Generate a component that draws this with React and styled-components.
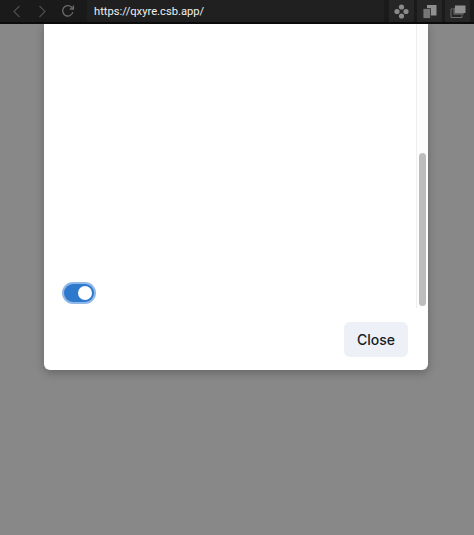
import React, { useState } from 'react';
import styled, { createGlobalStyle } from 'styled-components';

const Global = createGlobalStyle`
    html, body{
        margin: 0;
        padding: 0;
        height: 100%;
        overflow: hidden;
        background: #888888;
        font-family: Inter, "Liberation Sans", sans-serif;
    }
`

const Page = styled.div`
    display: flex;
    flex-direction: column;
    height: 535px;
    background: #888888;
`

const BrowserBar = styled.header`
    display: flex;
    align-items: stretch;
    height: 22px;
    background: #1a1a1a;
    border-bottom: 2px solid #0c0c0c;
`

const NavButtons = styled.div`
    display: flex;
    align-items: center;
    gap: 10px;
    width: 87px;
    padding-left: 8px;
    box-sizing: border-box;
`

const NavButton = styled.span`
    display: flex;
    align-items: center;
    justify-content: center;
    width: 16px;
    height: 16px;
    color: ${p => p.$color || '#4a4a4a'};
`

const UrlField = styled.div`
    display: flex;
    align-items: center;
    flex: 1;
    padding-left: 7px;
    background: #202020;
    color: #efefef;
    font-family: Roboto, "Liberation Sans", sans-serif;
    font-size: 11.2px;
`

const ToolButtons = styled.div`
    display: flex;
    align-items: center;
    gap: 3px;
    margin-left: 5px;
    padding-right: 4px;
`

const ToolButton = styled.span`
    display: flex;
    align-items: center;
    justify-content: center;
    width: 25px;
    height: 22px;
    background: #262626;
`

const Overlay = styled.div`
    flex: 1;
    padding-left: 44px;
`

const Modal = styled.section`
    display: flex;
    flex-direction: column;
    width: 384px;
    height: 346px;
    background: #ffffff;
    border-radius: 0 0 6px 6px;
    box-shadow: 0 3px 8px rgba(0, 0, 0, 0.25);
`

const ModalBody = styled.div`
    display: flex;
    height: 284px;
`

const ModalContent = styled.div`
    display: flex;
    flex: 1;
    align-items: flex-end;
    padding: 0 0 6px 20px;
`

const ToggleTrack = styled.button`
    display: flex;
    align-items: center;
    justify-content: ${p => p.$on ? 'flex-end' : 'flex-start'};
    width: 30px;
    height: 18px;
    margin: 0;
    padding: 2px;
    box-sizing: border-box;
    border: 0;
    border-radius: 9px;
    background: ${p => p.$on ? '#2f79cc' : '#cbd5e0'};
    box-shadow: 0 0 0 2px #8fb8e8;
    cursor: pointer;
`

const ToggleKnob = styled.span`
    display: block;
    width: 14px;
    height: 14px;
    border-radius: 50%;
    background: #ffffff;
`

const ScrollTrack = styled.div`
    width: 12px;
    box-sizing: border-box;
    padding: 129px 2px 2px 2px;
    background: #fdfdfd;
    border-left: 1px solid #efefef;
`

const ScrollThumb = styled.div`
    width: 7px;
    height: 153px;
    border-radius: 4px;
    background: #bdbdbd;
`

const ModalFooter = styled.footer`
    display: flex;
    justify-content: flex-end;
    padding: 14px 20px 13px 0;
`

const CloseButton = styled.button`
    width: 64px;
    height: 35px;
    padding: 0;
    border: 0;
    border-radius: 6px;
    background: #edf1f7;
    color: #171c26;
    font-family: Inter, "Liberation Sans", sans-serif;
    font-size: 14px;
    font-weight: 500;
    cursor: pointer;
`

const App = () => {
    const [on, setOn] = useState(true)

    return(
        <Page>
            <Global />
            <BrowserBar>
                <NavButtons>
                    <NavButton>
                        <svg width="9" height="13" viewBox="0 0 9 13" fill="none" stroke="currentColor" strokeWidth="1.3"><path d="M7.5 1 2 6.5 7.5 12"/></svg>
                    </NavButton>
                    <NavButton>
                        <svg width="9" height="13" viewBox="0 0 9 13" fill="none" stroke="currentColor" strokeWidth="1.3"><path d="M1.5 1 7 6.5 1.5 12"/></svg>
                    </NavButton>
                    <NavButton $color="#6b6b6b">
                        <svg width="14" height="14" viewBox="0 0 14 14" fill="none" stroke="currentColor" strokeWidth="1.3"><path d="M11.9 8.2A5.2 5.2 0 1 1 10.4 3L12.2 4.8"/><path d="M12.4 1.4v3.6H8.8"/></svg>
                    </NavButton>
                </NavButtons>
                <UrlField>https://qxyre.csb.app/</UrlField>
                <ToolButtons>
                    <ToolButton>
                        <svg width="15" height="15" viewBox="0 0 15 15" fill="#8a8a8a"><circle cx="7.5" cy="3" r="2.6"/><circle cx="3" cy="7.5" r="2.6"/><circle cx="12" cy="7.5" r="2.6"/><circle cx="7.5" cy="12" r="2.6"/></svg>
                    </ToolButton>
                    <ToolButton>
                        <svg width="15" height="15" viewBox="0 0 15 15"><path d="M5 1h9.500v10.500H5z" fill="#8f8f8f"/><path d="M1 4.500h7.500V14.500H1z" fill="#757575" stroke="#272727" strokeWidth="0.8"/></svg>
                    </ToolButton>
                    <ToolButton>
                        <svg width="16" height="13" viewBox="0 0 16 13"><path d="M1 4h11v8.500H1z" fill="none" stroke="#6d6d6d"/><path d="M3 2.500h11v7.500H3z" fill="#5f5f5f" stroke="#272727" strokeWidth="0.6"/><path d="M5 .5h10.500v7.500H5z" fill="#8f8f8f"/></svg>
                    </ToolButton>
                </ToolButtons>
            </BrowserBar>
            <Overlay>
                <Modal>
                    <ModalBody>
                        <ModalContent>
                            <ToggleTrack $on={on} onClick={() => setOn(!on)}>
                                <ToggleKnob />
                            </ToggleTrack>
                        </ModalContent>
                        <ScrollTrack>
                            <ScrollThumb />
                        </ScrollTrack>
                    </ModalBody>
                    <ModalFooter>
                        <CloseButton>Close</CloseButton>
                    </ModalFooter>
                </Modal>
            </Overlay>
        </Page>
    )
}

export default App;
